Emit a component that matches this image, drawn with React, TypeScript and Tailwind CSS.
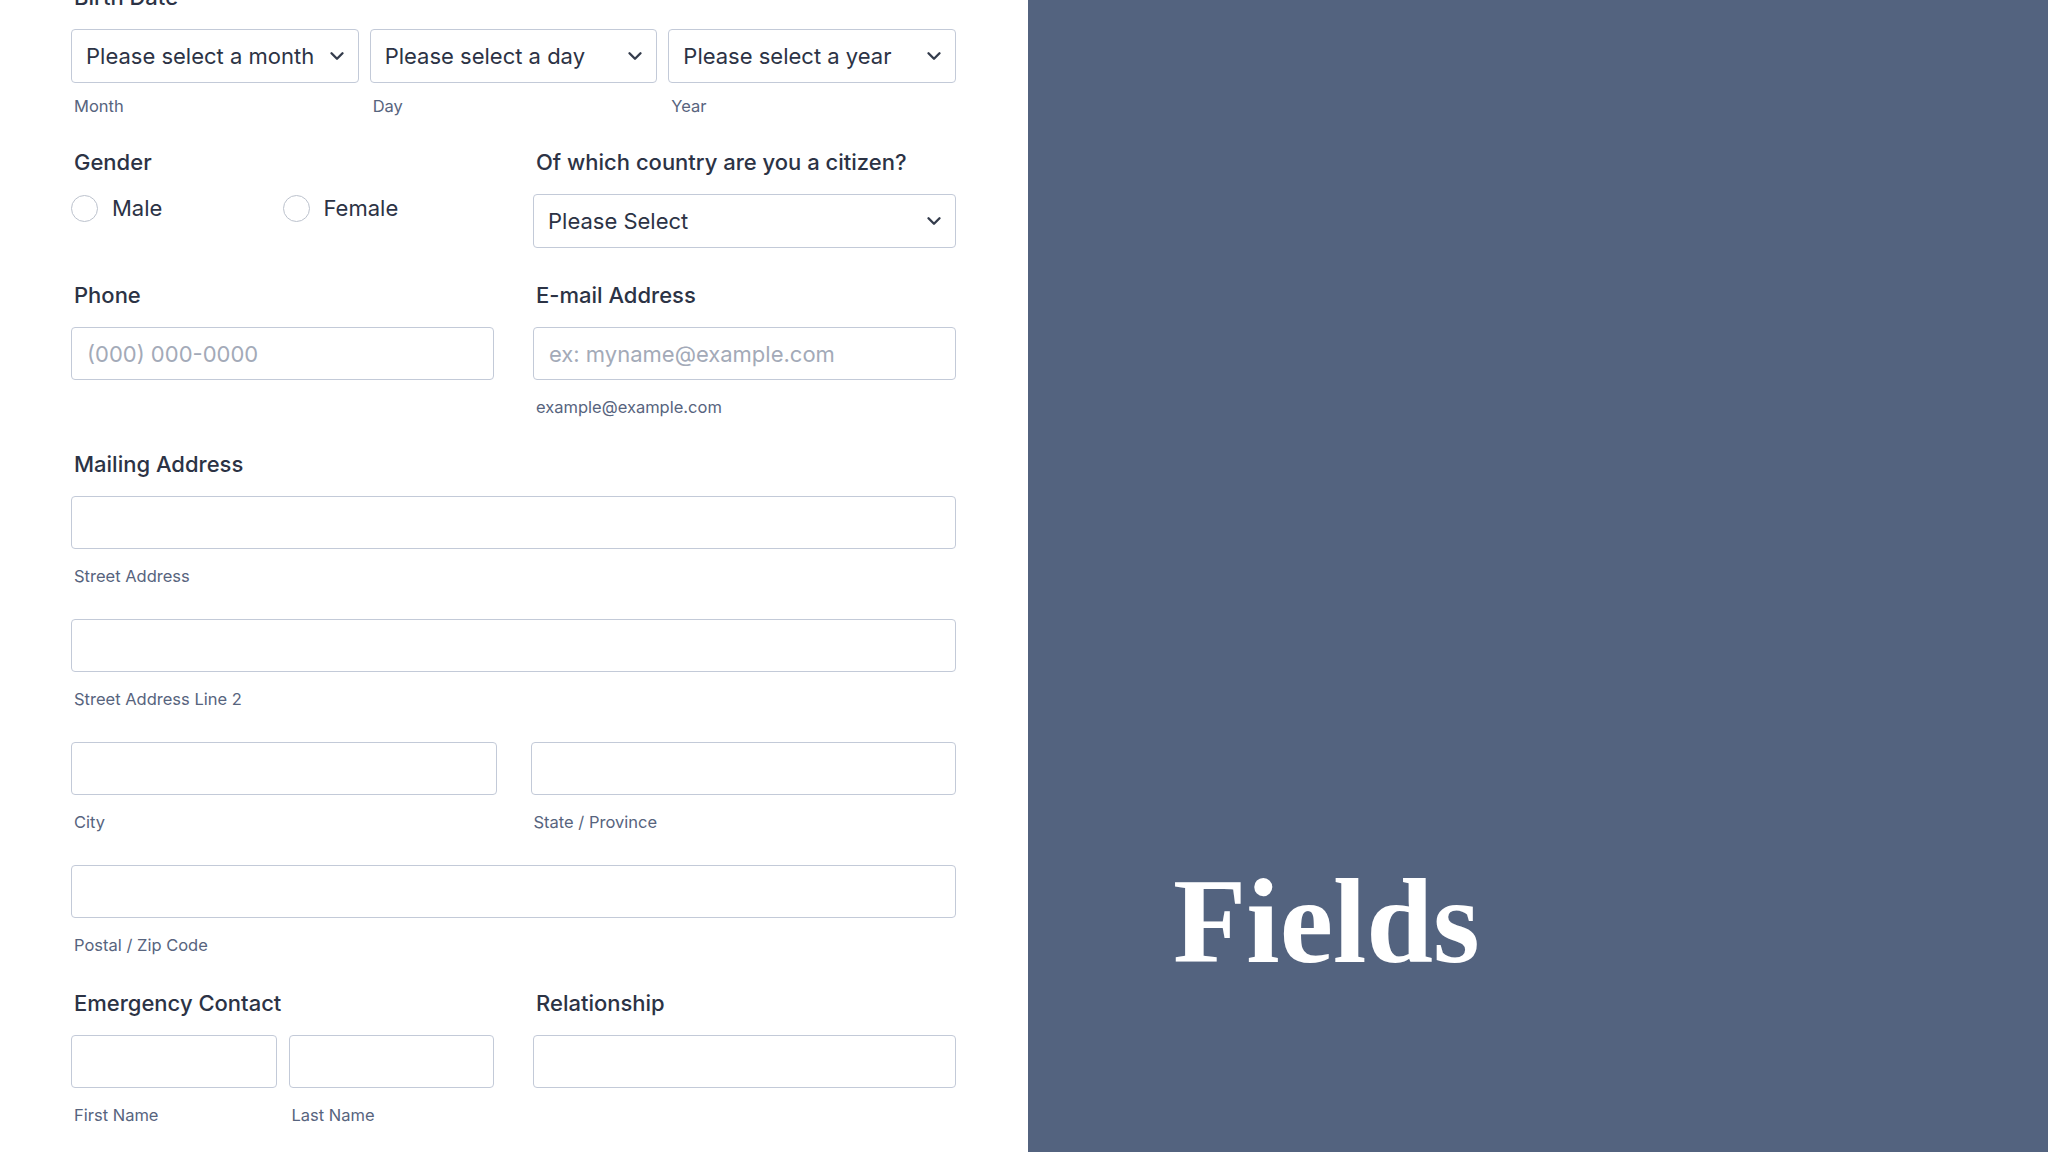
import React from "react";
import { ChevronDown } from "lucide-react";

const Label = ({ children }: { children: React.ReactNode }) => (
  <div className="pl-[3px] text-[22px] leading-[28px] font-medium text-[#2c3345] mb-[18px]">
    {children}
  </div>
);

const SubLabel = ({ children, className = "" }: { children?: React.ReactNode; className?: string }) => (
  <div className={`pl-[3px] text-[16.5px] leading-[20px] text-[#57647e] ${className}`}>{children}</div>
);

const TextBox = ({ placeholder = "" }: { placeholder?: string }) => (
  <input
    type="text"
    placeholder={placeholder}
    className="w-full h-[53px] px-[15px] bg-white border border-[#c3cad8] rounded-[4px] text-[22px] text-[#2c3345] placeholder:text-[#a3aab8] outline-none"
  />
);

const FakeSelect = ({ text }: { text: string }) => (
  <div className="flex items-center justify-between w-full h-[54px] pl-[14px] pr-[10px] bg-white border border-[#c3cad8] rounded-[4px]">
    <span className="text-[22px] text-[#2c3345] whitespace-nowrap">{text}</span>
    <ChevronDown size={22} strokeWidth={2.6} className="text-[#343c4c]" />
  </div>
);

const Radio = ({ label }: { label: string }) => (
  <label className="flex items-center gap-[14px] h-[28px]">
    <span className="w-[27px] h-[27px] rounded-full border-[1.5px] border-[#bcc2cd] bg-white" />
    <span className="text-[22px] text-[#2c3345]">{label}</span>
  </label>
);

const App = () => {
  return (
    <div className="flex w-[2048px] h-[1152px] overflow-hidden font-['Inter',sans-serif]">
      {/* form side */}
      <div className="w-[1028px] h-full bg-white pl-[71px] overflow-hidden">
        <div className="w-[885px] flex flex-col gap-[33px] -mt-[17px]">
          {/* birth date */}
          <div>
            <Label>Birth Date</Label>
            <div className="grid grid-cols-3 gap-[11px]">
              <div>
                <FakeSelect text="Please select a month" />
                <SubLabel className="mt-[13px]">Month</SubLabel>
              </div>
              <div>
                <FakeSelect text="Please select a day" />
                <SubLabel className="mt-[13px]">Day</SubLabel>
              </div>
              <div>
                <FakeSelect text="Please select a year" />
                <SubLabel className="mt-[13px]">Year</SubLabel>
              </div>
            </div>
          </div>

          {/* gender + country */}
          <div className="grid grid-cols-2 gap-[39px] -mt-[1px]">
            <div>
              <Label>Gender</Label>
              <div className="grid grid-cols-2">
                <Radio label="Male" />
                <Radio label="Female" />
              </div>
            </div>
            <div>
              <Label>Of which country are you a citizen?</Label>
              <FakeSelect text="Please Select" />
            </div>
          </div>

          {/* phone + email */}
          <div className="grid grid-cols-2 gap-[39px]">
            <div>
              <Label>Phone</Label>
              <TextBox placeholder="(000) 000-0000" />
            </div>
            <div>
              <Label>E-mail Address</Label>
              <TextBox placeholder="ex: myname@example.com" />
              <SubLabel className="mt-[17px]">example@example.com</SubLabel>
            </div>
          </div>

          {/* mailing address */}
          <div className="flex flex-col gap-[33px]">
            <div>
              <Label>Mailing Address</Label>
              <TextBox />
              <SubLabel className="mt-[17px]">Street Address</SubLabel>
            </div>
            <div>
              <TextBox />
              <SubLabel className="mt-[17px]">Street Address Line 2</SubLabel>
            </div>
            <div className="grid grid-cols-2 gap-[34px]">
              <div>
                <TextBox />
                <SubLabel className="mt-[17px]">City</SubLabel>
              </div>
              <div>
                <TextBox />
                <SubLabel className="mt-[17px]">State / Province</SubLabel>
              </div>
            </div>
            <div>
              <TextBox />
              <SubLabel className="mt-[17px]">Postal / Zip Code</SubLabel>
            </div>
          </div>

          {/* emergency contact */}
          <div className="grid grid-cols-2 gap-[39px] mt-[1px]">
            <div>
              <Label>Emergency Contact</Label>
              <div className="grid grid-cols-2 gap-[12px]">
                <div>
                  <TextBox />
                  <SubLabel className="mt-[17px]">First Name</SubLabel>
                </div>
                <div>
                  <TextBox />
                  <SubLabel className="mt-[17px]">Last Name</SubLabel>
                </div>
              </div>
            </div>
            <div>
              <Label>Relationship</Label>
              <TextBox />
            </div>
          </div>
        </div>
      </div>

      {/* title side */}
      <div className="flex-1 h-full bg-[#53637f] flex flex-col justify-end pl-[145px] pb-[170px]">
        <h1 className="text-[120px] leading-none font-bold text-white font-['Liberation_Serif',serif]">
          Fields
        </h1>
      </div>
    </div>
  );
};

export default App;
